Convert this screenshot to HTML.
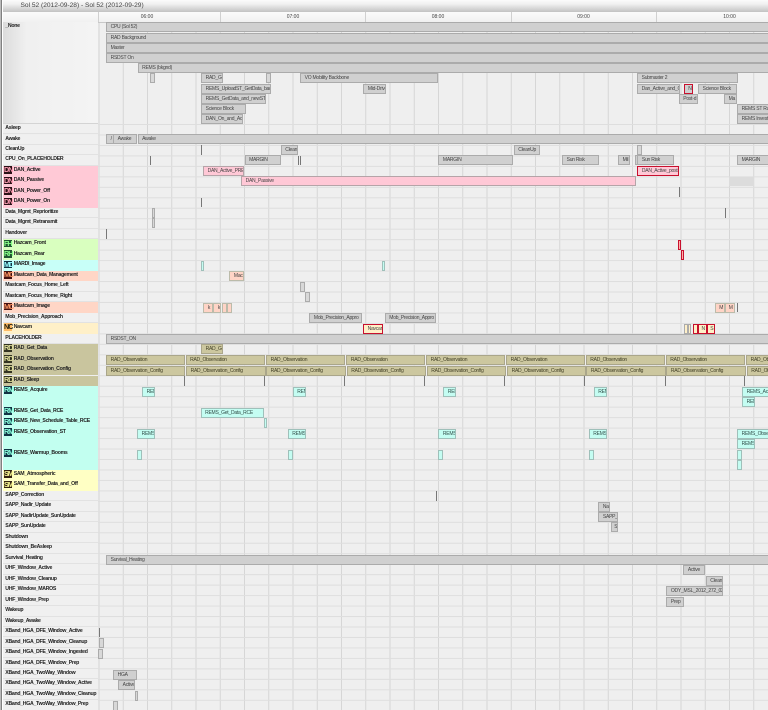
<!DOCTYPE html>
<html><head><meta charset="utf-8"><title>Sol 52</title>
<style>
html,body{margin:0;padding:0;background:#efefef}
#w{position:relative;width:768px;height:710px;overflow:hidden;background:#efefef;font-family:"Liberation Sans",sans-serif;filter:blur(.28px)}
#w div{position:absolute;box-sizing:border-box;white-space:nowrap;overflow:hidden}
#g{left:98px;top:22px;width:670px;height:688px;background-color:#efefef;background-image:linear-gradient(90deg,#d6d6d6 1px,transparent 1px);background-size:24.25px 100%;background-position:.5px 0}
#h{left:98px;top:124px;width:670px;height:586px;background-image:linear-gradient(180deg,#dedede 1px,transparent 1px);background-size:100% 10.48px}
#top{left:0;top:0;width:768px;height:12px;background:linear-gradient(180deg,#fbfbfb,#f0f0f0 35%,#c2c2c2)}
#top span{position:absolute;left:20.5px;top:2px;font-size:6.6px;line-height:8px;color:#444}
#rul{left:0;top:12px;width:768px;height:10.5px;background:linear-gradient(180deg,#fafafa,#f0f0f0);border-bottom:1px solid #c8c8c8}
.tk{top:12px;width:1px;height:10px;background:#d0d0d0}
.tm{top:13.5px;width:20px;text-align:center;font-size:5px;line-height:7px;color:#444}
#edge{left:0;top:0;width:3px;height:710px;background:linear-gradient(90deg,#bbb 0,#bbb 1px,#808080 1px,#808080 2px,#fff 2px)}
.l{left:3px;width:95px;height:10.48px;font-weight:bold;font-size:5.2px;letter-spacing:-.3px;line-height:8.6px;color:#222;padding-left:2.3px;background:#f0f0f0;border-bottom:1px solid #e2e2e2}
.l.i{padding-left:10.7px}
.l span{position:absolute;left:1px;top:.4px;width:7.7px;height:7.6px;background:#222;font-size:7.2px;line-height:7.6px;letter-spacing:-1px;text-align:center;color:inherit}
.dn{background:#ffc9d6;border-bottom-color:#ffc9d6}.dn span{color:#ff9fb5;background:#2a1016}
.hz{background:#d9ffbf;border-bottom-color:#d9ffbf}.hz span{color:#8f8;background:#253}
.md{background:#c8fff8;border-bottom-color:#c8fff8}.md span{color:#9ff;background:#134}
.mc{background:#ffd6c6;border-bottom-color:#ffd6c6}.mc span{color:#f96;background:#411}
.nc{background:#fff0c8;border-bottom-color:#fff0c8}.nc span{color:#221;background:#fb6}
.rd{background:#c9c59e;border-bottom-color:#c9c59e}.rd span{color:#dd9;background:#332}
.rm{background:#c2fff0;border-bottom-color:#c2fff0}.rm span{color:#8fd;background:#134}
.sm{background:#ffffc4;border-bottom-color:#ffffc4}.sm span{color:#ff9;background:#321}
.b{border:1px solid #ababab;background:#d0d0d0;color:#444;font-size:5px;letter-spacing:-.24px;line-height:9px;padding-left:3.6px;height:10px}
.n{background:#777;width:1px;height:9.5px}
.v{background:#d8d8d8;width:4.5px;padding:0}
.p{background:#ffc8d6;border-color:#b5a4a8}
.x{border-color:#c8102e;color:#444}
.o{background:#ccc79f;border-color:#aaa68a;color:#444228}
.t{background:#c4fdf2;border-color:#9fc0ba;color:#33504b}
.s{background:#ffd4c6;border-color:#bba}
</style></head><body><div id="w">
<div id="g"></div><div id="h"></div>
<div id="rul"></div>
<div class="tk" style="left:98px"></div><div class="tk" style="left:220px"></div><div class="tk" style="left:365px"></div><div class="tk" style="left:511px"></div><div class="tk" style="left:656px"></div>
<div class="tm" style="left:137px">06:00</div><div class="tm" style="left:283px">07:00</div><div class="tm" style="left:428px">08:00</div><div class="tm" style="left:573.5px">09:00</div><div class="tm" style="left:719.5px">10:00</div>
<div id="top"><span>Sol 52 (2012-09-28) - Sol 52 (2012-09-29)</span></div>

<div class="l" style="top:22px;height:102px;background:linear-gradient(90deg,#dcdcdc,#f0f0f0 25%,#f4f4f4);border-bottom:1px solid #d4d4d4;line-height:7px;padding-top:1px">_None</div>
<div class="l" style="top:124px">Asleep</div>
<div class="l" style="top:134.5px">Awake</div>
<div class="l" style="top:145px">CleanUp</div>
<div class="l" style="top:155.4px">CPU_On_PLACEHOLDER</div>
<div class="l i dn" style="top:165.9px"><span>DN</span>DAN_Active</div>
<div class="l i dn" style="top:176.4px"><span>DN</span>DAN_Passive</div>
<div class="l i dn" style="top:186.9px"><span>DN</span>DAN_Power_Off</div>
<div class="l i dn" style="top:197.4px"><span>DN</span>DAN_Power_On</div>
<div class="l" style="top:207.8px">Data_Mgmt_Reprioritize</div>
<div class="l" style="top:218.3px">Data_Mgmt_Retransmit</div>
<div class="l" style="top:228.8px">Handover</div>
<div class="l i hz" style="top:239.3px"><span>FH</span>Hazcam_Front</div>
<div class="l i hz" style="top:249.8px"><span>RH</span>Hazcam_Rear</div>
<div class="l i md" style="top:260.2px"><span>MD</span>MARDI_Image</div>
<div class="l i mc" style="top:270.7px"><span>MC</span>Mastcam_Data_Management</div>
<div class="l" style="top:281.2px">Mastcam_Focus_Home_Left</div>
<div class="l" style="top:291.7px">Mastcam_Focus_Home_Right</div>
<div class="l i mc" style="top:302.2px"><span>MC</span>Mastcam_Image</div>
<div class="l" style="top:312.6px">Mob_Precision_Approach</div>
<div class="l i nc" style="top:323.1px"><span>NC</span>Navcam</div>
<div class="l" style="top:333.6px">PLACEHOLDER</div>
<div class="l i rd" style="top:344.1px"><span>RD</span>RAD_Get_Data</div>
<div class="l i rd" style="top:354.6px"><span>RD</span>RAD_Observation</div>
<div class="l i rd" style="top:365px"><span>RD</span>RAD_Observation_Config</div>
<div class="l i rd" style="top:375.5px"><span>RD</span>RAD_Sleep</div>
<div class="l i rm" style="top:386px;height:21px"><span>RM</span>REMS_Acquire</div>
<div class="l i rm" style="top:407px"><span>RM</span>REMS_Get_Data_RCE</div>
<div class="l i rm" style="top:417.4px"><span>RM</span>REMS_New_Schedule_Table_RCE</div>
<div class="l i rm" style="top:427.9px;height:21px"><span>RM</span>REMS_Observation_ST</div>
<div class="l i rm" style="top:448.9px;height:21px"><span>RM</span>REMS_Warmup_Booms</div>
<div class="l i sm" style="top:469.8px"><span>SM</span>SAM_Atmospheric</div>
<div class="l i sm" style="top:480.3px"><span>SM</span>SAM_Transfer_Data_and_Off</div>
<div class="l" style="top:490.8px">SAPP_Correction</div>
<div class="l" style="top:501.3px">SAPP_Nadir_Update</div>
<div class="l" style="top:511.8px">SAPP_NadirUpdate_SunUpdate</div>
<div class="l" style="top:522.2px">SAPP_SunUpdate</div>
<div class="l" style="top:532.7px">Shutdown</div>
<div class="l" style="top:543.2px">Shutdown_BeAsleep</div>
<div class="l" style="top:553.7px">Survival_Heating</div>
<div class="l" style="top:564.2px">UHF_Window_Active</div>
<div class="l" style="top:574.6px">UHF_Window_Cleanup</div>
<div class="l" style="top:585.1px">UHF_Window_MAROS</div>
<div class="l" style="top:595.6px">UHF_Window_Prep</div>
<div class="l" style="top:606.1px">Wakeup</div>
<div class="l" style="top:616.6px">Wakeup_Awake</div>
<div class="l" style="top:627px">XBand_HGA_DFE_Window_Active</div>
<div class="l" style="top:637.5px">XBand_HGA_DFE_Window_Cleanup</div>
<div class="l" style="top:648px">XBand_HGA_DFE_Window_Ingested</div>
<div class="l" style="top:658.5px">XBand_HGA_DFE_Window_Prep</div>
<div class="l" style="top:669px">XBand_HGA_TwoWay_Window</div>
<div class="l" style="top:679.4px">XBand_HGA_TwoWay_Window_Active</div>
<div class="l" style="top:689.9px">XBand_HGA_TwoWay_Window_Cleanup</div>
<div class="l" style="top:700.4px">XBand_HGA_TwoWay_Window_Prep</div>

<div class="b" style="left:106px;top:22.3px;width:670px">CPU (Sol 52)</div>
<div class="b" style="left:106px;top:32.5px;width:670px">RAD Background</div>
<div class="b" style="left:106px;top:42.7px;width:670px">Master</div>
<div class="b" style="left:106px;top:53px;width:670px">RSDST On</div>
<div class="b" style="left:137.5px;top:63.2px;width:640px">REMS (bkgnd)</div>
<div class="b v" style="left:150px;top:73.3px"></div>
<div class="b" style="left:201px;top:73.3px;width:21.5px">RAD_Get</div>
<div class="b v" style="left:266px;top:73.3px"></div>
<div class="b" style="left:300px;top:73.3px;width:137.6px">VO Mobility Backbone</div>
<div class="b" style="left:637px;top:73.3px;width:100.7px">Submaster 2</div>
<div class="b" style="left:201px;top:83.5px;width:69.7px">REMS_UploadST_GetData_back</div>
<div class="b" style="left:363.3px;top:83.5px;width:22.4px">Mid-Drive</div>
<div class="b" style="left:637px;top:83.5px;width:42.7px">Dan_Active_and_C</div>
<div class="b x" style="left:683.7px;top:83.5px;width:9.3px">N</div>
<div class="b" style="left:698px;top:83.5px;width:38.7px">Science Block</div>
<div class="b" style="left:201px;top:93.7px;width:65px">REMS_GetData_and_newST</div>
<div class="b" style="left:678.7px;top:93.7px;width:19px">Post-d</div>
<div class="b" style="left:724px;top:93.7px;width:12.7px">Ma</div>
<div class="b" style="left:201px;top:103.9px;width:44.7px">Science Block</div>
<div class="b" style="left:737px;top:103.9px;width:40px">REMS ST Run</div>
<div class="b" style="left:201px;top:114px;width:42px">DAN_On_and_Act</div>
<div class="b" style="left:737px;top:114px;width:40px">REMS Investi</div>

<div class="b" style="left:106px;top:134.3px;width:7.5px">/</div>
<div class="b" style="left:113px;top:134.3px;width:24px">Awake</div>
<div class="b" style="left:137.5px;top:134.3px;width:640px">Awake</div>

<div class="n" style="left:200.5px;top:145px;width:1.5px"></div>
<div class="b" style="left:280.7px;top:144.7px;width:17px">Clean</div>
<div class="b" style="left:513.7px;top:144.7px;width:26.6px">CleanUp</div>
<div class="b v" style="left:637.3px;top:144.7px"></div>

<div class="n" style="left:150px;top:155.5px"></div>
<div class="b" style="left:244.5px;top:155.2px;width:36.2px">MARGIN</div>
<div class="n" style="left:298px;top:155.5px"></div>
<div class="n" style="left:300px;top:155.5px"></div>
<div class="b" style="left:438.3px;top:155.2px;width:74.7px">MARGIN</div>
<div class="b" style="left:562px;top:155.2px;width:36.7px">Sun Risk</div>
<div class="b" style="left:618px;top:155.2px;width:12px">Mil</div>
<div class="b" style="left:635px;top:155.2px;width:2.5px;padding:0"></div>
<div class="b" style="left:637.3px;top:155.2px;width:36.4px">Sun Risk</div>
<div class="b" style="left:737px;top:155.2px;width:40px">MARGIN</div>

<div class="b p" style="left:203px;top:165.8px;width:41px">DAN_Active_PREc</div>
<div class="b p x" style="left:637.3px;top:165.8px;width:41.4px">DAN_Active_post</div>

<div class="b p" style="left:241px;top:176.3px;width:394.7px">DAN_Passive</div>
<div style="left:729px;top:176.5px;width:24.7px;height:9.5px;background:#dcdcdc"></div>

<div class="n" style="left:678.7px;top:187px"></div>
<div class="n" style="left:200.5px;top:197.5px;width:1.5px"></div>
<div class="b v" style="left:152px;top:207.8px;width:3px"></div>
<div class="n" style="left:724.7px;top:208px"></div>
<div class="b v" style="left:152px;top:218.3px;width:3px"></div>
<div class="n" style="left:106.3px;top:229px"></div>

<div class="b x" style="left:678.3px;top:239.5px;width:2.9px;padding:0;background:#ffb0a8"></div>
<div class="b x" style="left:681.2px;top:250px;width:2.9px;padding:0;background:#ffb0a8"></div>
<div class="b t" style="left:200.5px;top:260.5px;width:3px;padding:0"></div>
<div class="b t" style="left:382px;top:260.5px;width:3px;padding:0"></div>
<div class="b s" style="left:229.3px;top:271px;width:14.7px">Mac</div>
<div class="b v" style="left:300px;top:281.5px;width:5px"></div>
<div class="b v" style="left:305px;top:292px;width:5px"></div>
<div class="b s" style="left:203.3px;top:302.5px;width:10px">k</div>
<div class="b s" style="left:213.3px;top:302.5px;width:8.2px">k</div>
<div class="b s" style="left:222.3px;top:302.5px;width:4.4px;padding:0"></div>
<div class="b s" style="left:226.7px;top:302.5px;width:5px;padding:0"></div>
<div class="b s" style="left:715.3px;top:302.5px;width:10px;padding-left:3px">M</div>
<div class="b s" style="left:725.3px;top:302.5px;width:9.4px;padding-left:2.5px">M</div>
<div class="n" style="left:737px;top:302.7px"></div>
<div class="b" style="left:309.3px;top:313px;width:52.4px">Mob_Precision_Appro</div>
<div class="b" style="left:384.7px;top:313px;width:51.6px">Mob_Precision_Appro</div>

<div class="b x" style="left:363px;top:323.6px;width:20.3px;background:#fff0c8">Navcam</div>
<div class="b" style="left:683.7px;top:323.6px;width:4.3px;padding:0;background:#fff0c8"></div>
<div class="b" style="left:688px;top:323.6px;width:3px;padding:0;background:#fff0c8"></div>
<div class="b x" style="left:693px;top:323.6px;width:5px;padding:0;background:#fff0c8"></div>
<div class="b x" style="left:698px;top:323.6px;width:9.3px;padding-left:2.5px;background:#fff0c8">N</div>
<div class="b x" style="left:707.3px;top:323.6px;width:7.4px;padding-left:2px;background:#fff0c8">S</div>

<div class="b" style="left:106px;top:334px;width:670px">RSDST_ON</div>
<div class="b o" style="left:201px;top:344.4px;width:21.5px">RAD_Get</div>

<div class="b o" style="left:106px;top:355px;width:79px">RAD_Observation</div>
<div class="b o" style="left:185.5px;top:355px;width:79.5px">RAD_Observation</div>
<div class="b o" style="left:266px;top:355px;width:79.3px">RAD_Observation</div>
<div class="b o" style="left:346.3px;top:355px;width:78.7px">RAD_Observation</div>
<div class="b o" style="left:426px;top:355px;width:79px">RAD_Observation</div>
<div class="b o" style="left:506px;top:355px;width:79px">RAD_Observation</div>
<div class="b o" style="left:585.7px;top:355px;width:79.3px">RAD_Observation</div>
<div class="b o" style="left:665.7px;top:355px;width:79.6px">RAD_Observation</div>
<div class="b o" style="left:746px;top:355px;width:30px">RAD_Observation</div>

<div class="b o" style="left:106px;top:365.5px;width:79.3px">RAD_Observation_Config</div>
<div class="b o" style="left:186px;top:365.5px;width:80px">RAD_Observation_Config</div>
<div class="b o" style="left:266px;top:365.5px;width:80px">RAD_Observation_Config</div>
<div class="b o" style="left:346.7px;top:365.5px;width:79.3px">RAD_Observation_Config</div>
<div class="b o" style="left:426.7px;top:365.5px;width:79.3px">RAD_Observation_Config</div>
<div class="b o" style="left:507px;top:365.5px;width:79px">RAD_Observation_Config</div>
<div class="b o" style="left:586.3px;top:365.5px;width:79.7px">RAD_Observation_Config</div>
<div class="b o" style="left:666.3px;top:365.5px;width:79.7px">RAD_Observation_Config</div>
<div class="b o" style="left:746.7px;top:365.5px;width:30px">RAD_Observation_Config</div>

<div class="n" style="left:184px;top:376px"></div><div class="n" style="left:264px;top:376px"></div><div class="n" style="left:344.3px;top:376px"></div><div class="n" style="left:424.3px;top:376px"></div><div class="n" style="left:504px;top:376px"></div><div class="n" style="left:584.3px;top:376px"></div><div class="n" style="left:664.7px;top:376px"></div><div class="n" style="left:744.3px;top:376px"></div>

<div class="b t" style="left:142px;top:387px;width:13px">REMS</div>
<div class="b t" style="left:292.7px;top:387px;width:13px">REMS</div>
<div class="b t" style="left:443.3px;top:387px;width:12.7px">REMS</div>
<div class="b t" style="left:593.7px;top:387px;width:13px">REMS</div>
<div class="b t" style="left:742px;top:387px;width:34px">REMS_Acquire</div>
<div class="b t" style="left:742px;top:397.3px;width:13px">REMS</div>
<div class="b t" style="left:200.5px;top:407.5px;width:63px">REMS_Get_Data_RCE</div>
<div class="b t" style="left:264px;top:418px;width:2.5px;padding:0"></div>
<div class="b t" style="left:137px;top:429px;width:18px">REMS</div>
<div class="b t" style="left:287.7px;top:429px;width:18px">REMS</div>
<div class="b t" style="left:438.3px;top:429px;width:18px">REMS</div>
<div class="b t" style="left:588.7px;top:429px;width:18px">REMS</div>
<div class="b t" style="left:737px;top:429px;width:40px">REMS_Observ</div>
<div class="b t" style="left:737px;top:439px;width:17.7px">REMS</div>
<div class="b t" style="left:137px;top:449.5px;width:5px;padding:0"></div>
<div class="b t" style="left:287.7px;top:449.5px;width:5px;padding:0"></div>
<div class="b t" style="left:438.3px;top:449.5px;width:5px;padding:0"></div>
<div class="b t" style="left:588.7px;top:449.5px;width:5px;padding:0"></div>
<div class="b t" style="left:737px;top:449.5px;width:5px;padding:0"></div>
<div class="b t" style="left:737px;top:459.5px;width:5px;padding:0"></div>

<div class="n" style="left:435.7px;top:491px"></div>
<div class="b" style="left:598.3px;top:501.5px;width:12px">Nadir</div>
<div class="b" style="left:598.3px;top:512px;width:19.4px">SAPP_I</div>
<div class="b" style="left:610.7px;top:522.3px;width:7.3px;padding-left:2.5px">S</div>
<div class="b" style="left:106px;top:554.5px;width:670px">Survival_Heating</div>
<div class="b" style="left:683.3px;top:565px;width:21.7px">Active</div>
<div class="b" style="left:705.7px;top:575.5px;width:17.3px">Clean</div>
<div class="b" style="left:666.3px;top:586px;width:56.7px">ODY_MSL_2012_272_02</div>
<div class="b" style="left:666.3px;top:596.5px;width:17.7px">Prep</div>
<div class="n" style="left:98.5px;top:627.5px"></div>
<div class="b v" style="left:99px;top:638px"></div>
<div class="b v" style="left:98px;top:648.5px"></div>
<div class="b" style="left:113px;top:670px;width:24px">HGA</div>
<div class="b" style="left:118px;top:680.3px;width:16.7px">Active</div>
<div class="b v" style="left:135.3px;top:691px;width:2.5px"></div>
<div class="b v" style="left:113px;top:701.4px;width:4.7px"></div>
<div id="edge"></div>
</div></body></html>
